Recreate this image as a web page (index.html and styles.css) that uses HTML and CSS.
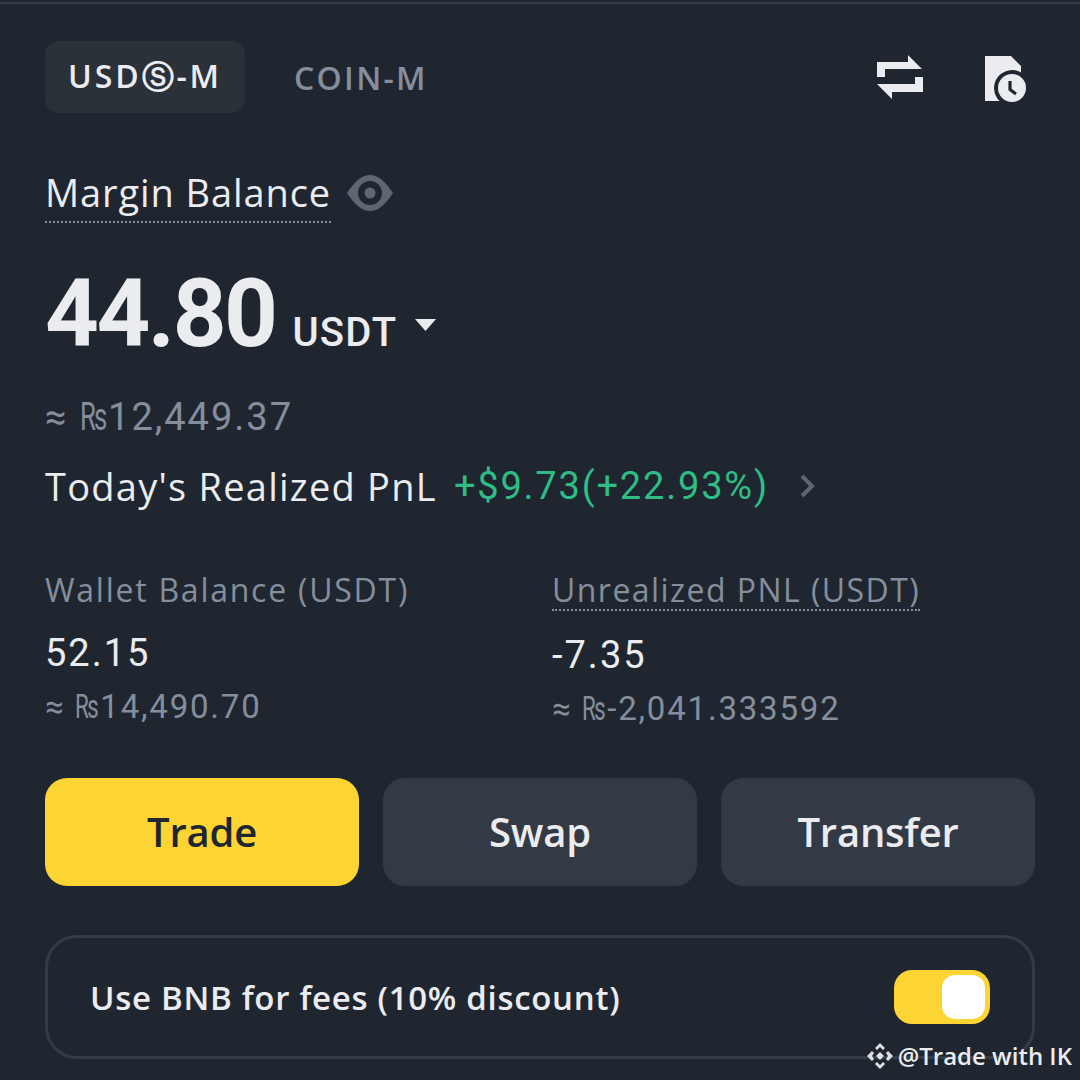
FILE: index.html
```html
<!DOCTYPE html>
<html lang="en">
<head>
<meta charset="utf-8">
<title>Futures wallet</title>
<link rel="stylesheet" href="styles.css">
</head>
<body>
<main class="page">
  <header class="tabs">
    <div class="tab-group">
      <span class="tab tab-active">USDⓈ-M</span>
      <span class="tab">COIN-M</span>
    </div>
    <div class="tab-icons">
      <svg class="icon-swap" width="46" height="44" viewBox="0 0 46 44"><path fill="#eaecef" d="M0 7H31V0L45 14H8V22H0ZM46 22V37H15V44L0 29H38V22Z"/></svg>
      <svg class="icon-doc" width="42" height="46" viewBox="0 0 42 46"><path fill="#eaecef" d="M0 0H26L36 10V16.4A18 18 0 0 0 14.6 45H0Z"/><circle cx="27" cy="32" r="14" fill="#eaecef"/><path d="M25 25V33.5L31 38" fill="none" stroke="#202630" stroke-width="3.2"/></svg>
    </div>
  </header>

  <div class="balance-label">
    <span class="dotted">Margin Balance</span>
    <svg class="eye" width="46" height="36" viewBox="0 0 46 36"><path fill="#5e6673" fill-rule="evenodd" d="M0 18C8 6 15 0 23 0S38 6 46 18C38 30 31 36 23 36S8 30 0 18ZM23 6A12 12 0 1 0 23 30A12 12 0 1 0 23 6ZM23 12.500A5.500 5.500 0 1 1 23 23.500A5.500 5.500 0 1 1 23 12.500Z"/></svg>
  </div>

  <div class="balance">
    <span class="balance-value">44.80</span>
    <span class="balance-unit">USDT</span>
    <svg class="caret" width="21" height="12" viewBox="0 0 21 12"><path fill="#eaecef" d="M0 0H21L10.500 12Z"/></svg>
  </div>

  <div class="fiat fiat-main">≈ <span class="rs">₨</span>12,449.37</div>

  <div class="pnl">
    <span class="pnl-label">Today's Realized PnL</span>
    <span class="pnl-value">+$9.73(+22.93%)</span>
    <svg width="18" height="26" viewBox="0 0 18 26"><path fill="none" stroke="#5e6673" stroke-width="4" d="M3 3L13 13L3 23"/></svg>
  </div>

  <section class="stats">
    <div class="stat">
      <div class="stat-label">Wallet Balance (USDT)</div>
      <div class="stat-value">52.15</div>
      <div class="fiat fiat-small">≈ <span class="rs">₨</span>14,490.70</div>
    </div>
    <div class="stat stat-right">
      <div class="stat-label"><span class="dotted dotted-muted">Unrealized PNL (USDT)</span></div>
      <div class="stat-value">-7.35</div>
      <div class="fiat fiat-small">≈ <span class="rs">₨</span>-2,041.333592</div>
    </div>
  </section>

  <div class="actions">
    <button class="btn btn-primary">Trade</button>
    <button class="btn">Swap</button>
    <button class="btn">Transfer</button>
  </div>

  <section class="fee-card">
    <span class="fee-text">Use BNB for fees (10% discount)</span>
    <span class="toggle"><span class="knob"></span></span>
  </section>
</main>
<div class="watermark">
  <svg width="26" height="26" viewBox="0 0 26 26"><path fill="#dfe1e4" d="M13 0L18 5L16 7L13 4L10 7L8 5ZM5 8L7 10L5 13L7 16L5 18L0 13ZM21 8L26 13L21 18L19 16L21 13L19 10ZM13 9L17 13L13 17L9 13ZM8 21L10 19L13 22L16 19L18 21L13 26Z"/></svg>
  <span>@Trade with IK</span>
</div>
</body>
</html>
```
FILE: styles.css
```css
* { box-sizing: border-box; }
html, body { margin: 0; height: 1080px; overflow: hidden; }
body {
  position: relative;
  background: #202630;
  color: #eaecef;
  font-family: "Open Sans", "Noto Sans", sans-serif;
}
.page {
  height: 1078px;
  margin-top: 2px;
  padding: 37px 45px 0;
  border-top: 2px solid #333b47;
}
.tabs { display: flex; justify-content: space-between; align-items: center; height: 72px; }
.tab-group { display: flex; }
.tab {
  display: flex; align-items: center; justify-content: center;
  height: 72px;
  font-size: 32px; font-weight: 600; color: #848e9c; letter-spacing: 2.3px;
  border-radius: 14px;
}
.tab-active { width: 200px; background: #2b3139; color: #eaecef; margin-right: 49px; letter-spacing: 2.9px; }
.tab-icons { display: flex; align-items: center; gap: 62px; margin-right: 8px; }
.icon-doc { margin-top: 4px; }
.balance-label { display: flex; align-items: center; gap: 16px; margin-top: 56px; height: 54px; font-size: 38px; }
.eye { margin-top: -6px; }
.dotted { display: inline-block; border-bottom: 2px dotted #848e9c; line-height: 46px; padding-bottom: 6px; letter-spacing: 0.9px; }
.dotted-muted { line-height: 38px; padding-bottom: 0; letter-spacing: 1.45px; }
.balance { display: flex; align-items: baseline; margin-top: 46px; height: 90px; }
.balance-value { font-family: "Roboto", sans-serif; font-size: 94px; font-weight: 700; line-height: 90px; letter-spacing: -2.5px; }
.balance-unit { font-family: "Roboto", sans-serif; font-size: 40px; font-weight: 500; margin-left: 17px; letter-spacing: 1.2px; }
.caret { margin-left: 18px; align-self: center; margin-top: 22px; }
.fiat { font-family: "Roboto", "DejaVu Sans", sans-serif; color: #848e9c; letter-spacing: 2px; }
.rs { display: inline-block; transform: scaleX(0.68); transform-origin: left center; margin-right: -12px; letter-spacing: 0; }
.fiat-main { margin-top: 35px; font-size: 38px; line-height: 46px; }
.pnl { display: flex; align-items: center; margin-top: 21px; height: 50px; }
.pnl-label { font-size: 38px; letter-spacing: 1.25px; }
.pnl-value { font-family: "Roboto", sans-serif; font-size: 38px; color: #2ebd85; margin-left: 17px; letter-spacing: 1.8px; }
.pnl svg { margin-left: 30px; }
.stats { display: grid; grid-template-columns: 507px 1fr; margin-top: 59px; }
.stat-label { font-size: 32px; color: #848e9c; line-height: 40px; height: 42px; letter-spacing: 1.75px; }
.stat-value { font-family: "Roboto", sans-serif; font-size: 38px; letter-spacing: 2px; line-height: 48px; margin-top: 17px; }
.stat-right .stat-value { margin-top: 19px; }
.fiat-small { font-size: 33px; line-height: 40px; margin-top: 10px; letter-spacing: 1.8px; }
.fiat-small .rs { margin-right: -10px; }
.actions { display: grid; grid-template-columns: repeat(3, 314px); gap: 24px; margin-top: 49px; }
.btn {
  height: 108px; border: 0; border-radius: 22px;
  background: #333945; color: #eaecef;
  font: 600 40px "Open Sans", sans-serif;
  letter-spacing: -0.2px;
  padding-bottom: 2px;
}
.btn-primary { background: #fcd535; color: #202630; }
.fee-card {
  display: flex; align-items: center; justify-content: space-between;
  width: 990px; height: 124px; margin-top: 49px; padding: 0 42px;
  border: 3px solid #333b47; border-radius: 32px;
}
.fee-text { font-size: 33px; font-weight: 600; letter-spacing: 0.7px; }
.toggle { display: flex; justify-content: flex-end; align-items: center; width: 96px; height: 54px; padding-right: 5px; background: #fcd535; border-radius: 18px; }
.knob { width: 43px; height: 44px; background: #fff; border-radius: 13px; }
.watermark {
  position: absolute; right: 8px; bottom: 8px;
  display: flex; align-items: center; gap: 5px;
  font-size: 24px; font-weight: 600; color: #eaecef;
}
```
